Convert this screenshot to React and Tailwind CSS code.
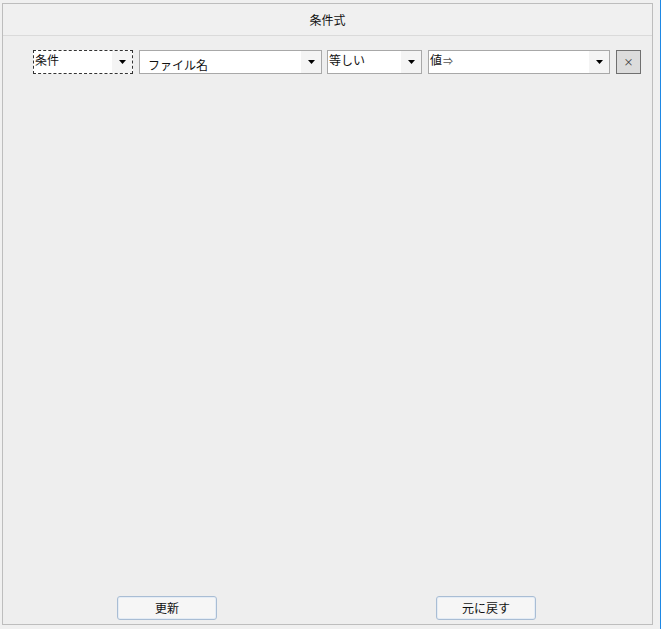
import React from 'react';

const font = { fontFamily: '"Meiryo UI", "Noto Sans CJK JP", "Liberation Sans", sans-serif' };

const Arrow = () => (
  <svg width="7" height="4" viewBox="0 0 7 4" className="block">
    <path d="M0 0H7L3.5 4Z" fill="#000" />
  </svg>
);

const Combo = ({ children, width, focused, indent }) => (
  <div
    className={`flex h-[24px] bg-white ${
      focused ? 'border border-dashed border-[#333]' : 'border border-[#a8a8a8]'
    }`}
    style={{ width }}
  >
    <div
      className={`flex-1 text-[12px] leading-[14px] text-[#111] ${
        indent ? 'pl-[8px] pt-[7px]' : 'pl-[1px] pt-[2px]'
      }`}
    >
      {children}
    </div>
    <div className="w-[20px] bg-[#f4f4f4] flex items-center justify-center">
      <Arrow />
    </div>
  </div>
);

const Button = ({ label }) => (
  <button className="w-[100px] h-[24px] rounded-[3px] border border-[#a9bdd4] bg-[#f6f6f6] shadow-[inset_0_0_0_1px_#e4ecf5] text-[12px] text-[#111] leading-none">
    {label}
  </button>
);

export default function App() {
  return (
    <div
      className="w-[661px] h-[629px] bg-[#f0f0f0] flex border-r border-r-[#1e88e5]"
      style={font}
    >
      <div className="ml-[2px] mt-[3px] w-[651px] h-[622px] border border-[#bdbdbd] bg-[#eeeeee] flex flex-col">
        {/* header */}
        <div className="h-[32px] border-b border-[#dadada] bg-[#f0f0f0] flex items-center justify-center text-[12px] text-[#111]">
          条件式
        </div>

        {/* condition row */}
        <div className="flex items-start pl-[30px] pt-[14px]">
          <Combo width={100} focused>条件</Combo>
          <div className="ml-[6px]">
            <Combo width={183} indent>ファイル名</Combo>
          </div>
          <div className="ml-[5px]">
            <Combo width={95}>等しい</Combo>
          </div>
          <div className="ml-[6px]">
            <Combo width={182}>
              値<span className="text-[10px] text-[#555] ml-[1px]">⇒</span>
            </Combo>
          </div>
          <button className="ml-[6px] w-[25px] h-[24px] border border-[#707070] bg-[#dcdcdc] flex items-center justify-center text-[10px] text-[#333] leading-none">
            ×
          </button>
        </div>

        {/* footer */}
        <div className="mt-auto flex pl-[114px] pb-[4px] gap-[219px]">
          <Button label="更新" />
          <Button label="元に戻す" />
        </div>
      </div>
    </div>
  );
}
